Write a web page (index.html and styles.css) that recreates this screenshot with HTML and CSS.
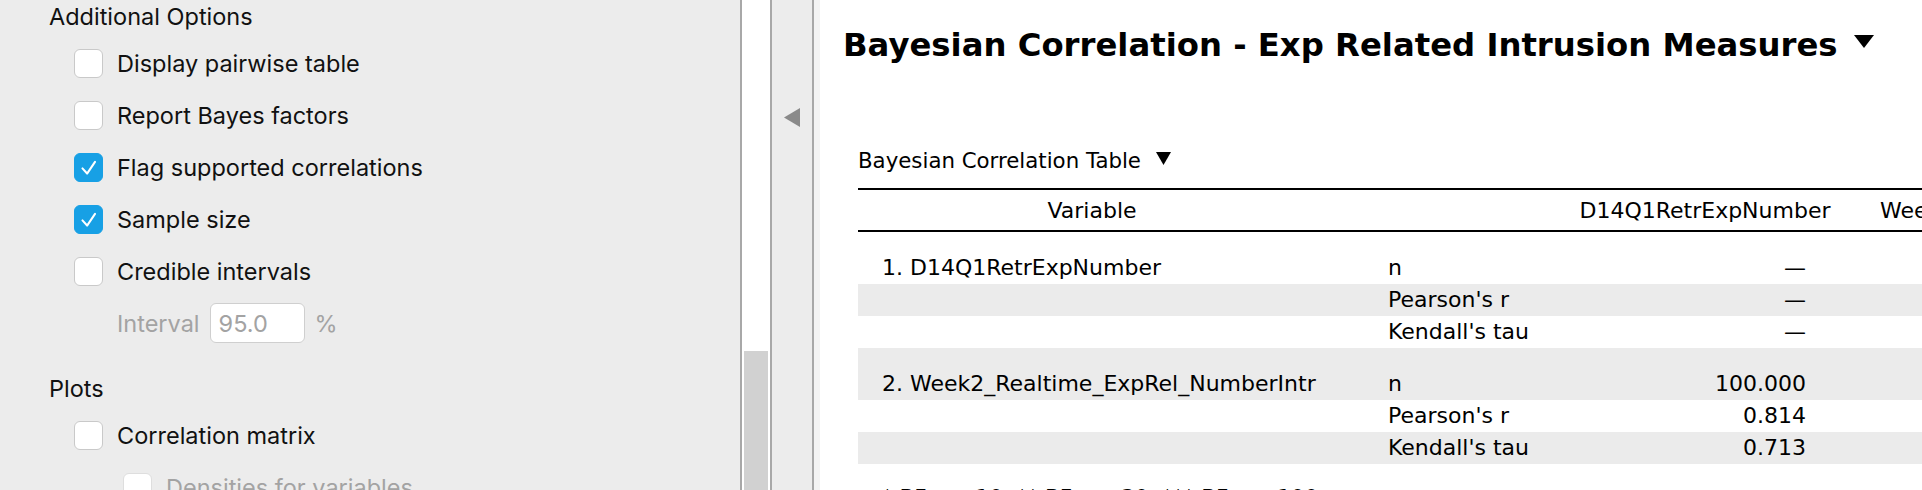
FILE: index.html
```html
<!DOCTYPE html>
<html lang="en">
<head>
    <meta charset="UTF-8">
    <title>Bayesian Correlation</title>
    <link rel="stylesheet" href="styles.css">
</head>
<body>
<div class="window">
    <aside class="options">
        <div class="section-title">Additional Options</div>
        <ul class="option-list">
            <li class="option"><span class="check"></span>Display pairwise table</li>
            <li class="option"><span class="check"></span>Report Bayes factors</li>
            <li class="option checked"><span class="check"><svg viewBox="0 0 29 29"><path d="M8 15.5 L13 21 L21.5 8.5"/></svg></span>Flag supported correlations</li>
            <li class="option checked"><span class="check"><svg viewBox="0 0 29 29"><path d="M8 15.5 L13 21 L21.5 8.5"/></svg></span>Sample size</li>
            <li class="option"><span class="check"></span>Credible intervals</li>
            <li class="option field-row disabled">Interval <span class="field">95.0</span> %</li>
        </ul>

        <div class="section-title plots">Plots</div>
        <ul class="option-list">
            <li class="option"><span class="check"></span>Correlation matrix</li>
            <li class="option nested disabled"><span class="check"></span>Densities for variables</li>
        </ul>
    </aside>

    <div class="scroll-track"><div class="scroll-thumb"></div></div>

    <div class="collapse-bar">
        <svg class="arrow-left" viewBox="0 0 16 19"><polygon points="16,0 16,19 0,9.5"/></svg>
    </div>

    <div class="gutter"></div>

    <main class="results">
        <h1 class="analysis-title">Bayesian Correlation - Exp Related Intrusion Measures
            <svg class="drop" viewBox="0 0 20 13"><polygon points="0,0 20,0 10,13"/></svg>
        </h1>

        <div class="analysis-body">
            <div class="table-title">Bayesian Correlation Table
                <svg class="drop small" viewBox="0 0 15 13"><polygon points="0,0 15,0 7.5,13"/></svg>
            </div>

            <table class="corr-table">
                <colgroup>
                    <col class="c-var"><col class="c-stat"><col class="c-val"><col class="c-next">
                </colgroup>
                <thead>
                    <tr>
                        <th class="center">Variable</th>
                        <th></th>
                        <th class="center">D14Q1RetrExpNumber</th>
                        <th class="next">Week2_Realtime_ExpRel_NumberIntr</th>
                    </tr>
                </thead>
                <tbody>
                    <tr class="group-start">
                        <td class="var">1. D14Q1RetrExpNumber</td><td class="stat">n</td><td class="val">—</td><td></td>
                    </tr>
                    <tr class="stripe">
                        <td></td><td class="stat">Pearson's r</td><td class="val">—</td><td></td>
                    </tr>
                    <tr>
                        <td></td><td class="stat">Kendall's tau</td><td class="val">—</td><td></td>
                    </tr>
                    <tr class="group-start stripe">
                        <td class="var">2. Week2_Realtime_ExpRel_NumberIntr</td><td class="stat">n</td><td class="val">100.000</td><td></td>
                    </tr>
                    <tr>
                        <td></td><td class="stat">Pearson's r</td><td class="val">0.814</td><td></td>
                    </tr>
                    <tr class="stripe">
                        <td></td><td class="stat">Kendall's tau</td><td class="val">0.713</td><td></td>
                    </tr>
                </tbody>
            </table>

            <div class="footnote">* BF₁₀ &gt; 10, ** BF₁₀ &gt; 30, *** BF₁₀ &gt; 100</div>
        </div>
    </main>
</div>
</body>
</html>
```

FILE: styles.css
```css
:root {
    --panel-grey: #ececec;
    --rule-grey: #a8a8a8;
    --check-blue: #17a0e5;
    --stripe: #ebebeb;
}

html, body {
    margin: 0;
    height: 100%;
    overflow: hidden;
}

.window {
    display: flex;
    width: 1922px;
    height: 490px;
    overflow: hidden;
}

/* left options panel */
.options {
    width: 691px;
    flex: none;
    background: var(--panel-grey);
    border-right: 2px solid var(--rule-grey);
    padding-left: 49px;
    font-family: Inter, "Noto Sans", sans-serif;
    font-size: 23.5px;
    color: #111;
}

.section-title {
    line-height: 34px;
    height: 34px;
}

.section-title.plots {
    margin-top: 23px;
}

.option-list {
    list-style: none;
    margin: 0;
    padding: 3px 0 0 25px;
}

.option {
    display: flex;
    align-items: center;
    height: 52px;
    white-space: nowrap;
}

.check {
    width: 29px;
    height: 29px;
    box-sizing: border-box;
    border: 1.5px solid #c9c9c9;
    border-radius: 6px;
    background: #fff;
    margin-right: 14px;
    flex: none;
}

.checked .check {
    background: var(--check-blue);
    border-color: var(--check-blue);
}

.check svg {
    display: block;
    width: 100%;
    height: 100%;
}

.check path {
    fill: none;
    stroke: #fff;
    stroke-width: 2.2;
    stroke-linecap: round;
    stroke-linejoin: round;
}

.disabled {
    color: #a3a3a3;
}

.field-row {
    padding-left: 43px;
}

.field {
    display: inline-flex;
    align-items: center;
    width: 95px;
    height: 40px;
    box-sizing: border-box;
    margin: 0 10px;
    padding-left: 8px;
    background: #fff;
    border: 1.5px solid #cfcfcf;
    border-radius: 6px;
}

.nested {
    padding-left: 49px;
}

.nested .check {
    border-color: #dedede;
}

/* scrollbar and collapse strip */
.scroll-track {
    width: 30px;
    box-sizing: border-box;
    flex: none;
    background: #fff;
    border-right: 2px solid var(--rule-grey);
    display: flex;
    flex-direction: column;
    justify-content: flex-end;
    padding: 0 2px;
}

.scroll-thumb {
    height: 139px;
    background: #d1d1d1;
}

.collapse-bar {
    width: 42px;
    box-sizing: border-box;
    flex: none;
    background: var(--panel-grey);
    border-right: 2px solid var(--rule-grey);
    padding: 108px 0 0 12px;
}

.arrow-left {
    display: block;
    width: 16px;
    height: 19px;
    fill: #8a8a8a;
}

.gutter {
    width: 6px;
    flex: none;
    background: #f3f3f3;
}

/* results */
.results {
    flex: 1;
    min-width: 0;
    background: #fff;
    padding: 26px 0 0 23px;
    overflow: hidden;
    font-family: "DejaVu Sans", Verdana, sans-serif;
    color: #000;
}

.analysis-title {
    margin: 0;
    font-size: 32.3px;
    font-weight: bold;
    line-height: 38px;
    white-space: nowrap;
}

.drop {
    width: 20px;
    height: 13px;
    margin-left: 5px;
    vertical-align: 8px;
}

.drop.small {
    width: 15px;
    height: 13px;
    margin-left: 8px;
    vertical-align: 3px;
}

.analysis-body {
    margin: 84px 0 0 15px;
}

.table-title {
    font-size: 21.3px;
    line-height: 25px;
    white-space: nowrap;
}

.corr-table {
    margin-top: 15px;
    border-collapse: collapse;
    table-layout: fixed;
    width: 1392px;
    font-size: 22px;
    white-space: nowrap;
}

.c-var { width: 468px; }
.c-stat { width: 234px; }
.c-val { width: 290px; }
.c-next { width: 400px; }

.corr-table thead tr {
    border-top: 2px solid #000;
    border-bottom: 2px solid #000;
}

.corr-table th {
    height: 40px;
    padding: 0;
    font-weight: normal;
    text-align: left;
}

.corr-table th.center {
    text-align: center;
}

.corr-table th.next {
    padding-left: 30px;
    overflow: hidden;
}

.corr-table td {
    height: 32px;
    line-height: 32px;
    padding: 0;
    vertical-align: bottom;
    overflow: hidden;
}

.corr-table .group-start td {
    padding-top: 20px;
}

.corr-table .stripe td {
    background: var(--stripe);
}

.corr-table td.var {
    padding-left: 24px;
}

.corr-table td.stat {
    padding-left: 62px;
}

.corr-table td.val {
    text-align: right;
    padding-right: 44px;
}

.footnote {
    margin-top: 21px;
    padding-left: 24px;
    font-size: 21.5px;
    line-height: 25px;
    white-space: nowrap;
}
```
